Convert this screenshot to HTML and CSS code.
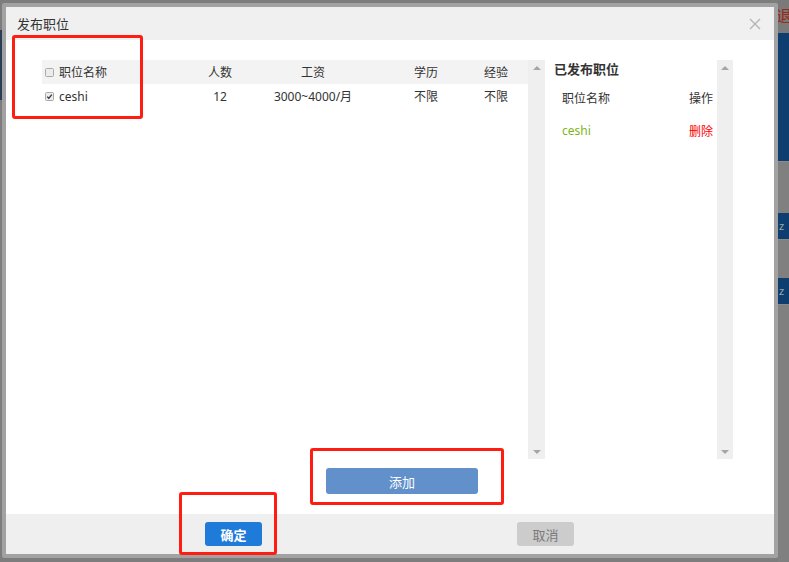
FILE: index.html
```html
<!DOCTYPE html>
<html lang="zh">
<head>
<meta charset="utf-8">
<title>发布职位</title>
<link rel="stylesheet" href="styles.css">
</head>
<body>
<div class="page">
  <div class="edge-left"><div class="edge-blue"></div></div>
  <div class="dialog">
    <div class="dlg-head">
      <span class="dlg-title">发布职位</span>
      <svg class="dlg-close" width="12" height="12" viewBox="0 0 12 12"><path d="M1 1L11 11M11 1L1 11" stroke="#b3b3b3" stroke-width="1.3" fill="none"/></svg>
    </div>
    <div class="dlg-body">
      <div class="panels">
        <div class="jobs">
          <div class="jrow jhead">
            <div class="c-name"><svg class="cb" width="9" height="9" viewBox="0 0 9 9"><rect x="0.5" y="0.5" width="8" height="8" rx="1" fill="#ececec" stroke="#a9a9a9"/></svg><span>职位名称</span></div>
            <div class="c-mid">人数</div>
            <div class="c-mid">工资</div>
            <div class="c-mid">学历</div>
            <div class="c-mid">经验</div>
          </div>
          <div class="jrow">
            <div class="c-name"><svg class="cb" width="9" height="9" viewBox="0 0 9 9"><rect x="0.5" y="0.5" width="8" height="8" rx="1" fill="#ececec" stroke="#a9a9a9"/><path d="M2.2 4.6L3.8 6.3L6.8 2.6" stroke="#333" stroke-width="1.3" fill="none"/></svg><span>ceshi</span></div>
            <div class="c-mid">12</div>
            <div class="c-mid">3000~4000/月</div>
            <div class="c-mid">不限</div>
            <div class="c-mid">不限</div>
          </div>
        </div>
        <div class="vscroll"><i class="arr up"></i><i class="arr down"></i></div>
        <div class="published">
          <div class="pub-title">已发布职位</div>
          <div class="pub-row"><span>职位名称</span><span>操作</span></div>
          <div class="pub-row"><span class="green">ceshi</span><span class="red">删除</span></div>
        </div>
        <div class="vscroll narrow"><i class="arr up"></i><i class="arr down"></i></div>
      </div>
      <div class="add-wrap"><button class="btn-add">添加</button></div>
    </div>
    <div class="dlg-foot">
      <button class="btn-ok">确定</button>
      <button class="btn-cancel">取消</button>
    </div>
  </div>
  <div class="edge-right">
    <div class="er-top"><span class="er-char">退</span></div>
    <div class="er-blue"></div>
    <div class="er-gray"></div>
    <div class="er-blue small"><span>z</span></div>
    <div class="er-gray mid"></div>
    <div class="er-blue small2"><span>z</span></div>
    <div class="er-gray"></div>
  </div>
  <div class="mark m1"></div>
  <div class="mark m2"></div>
  <div class="mark m3"></div>
</div>
</body>
</html>
```

FILE: styles.css
```css
* { box-sizing: border-box; }
html, body { margin: 0; padding: 0; }
body {
  width: 789px;
  height: 562px;
  overflow: hidden;
  background: #7d7d7d;
  font-family: "Noto Sans", "Noto Sans CJK SC", sans-serif;
  color: #333;
}
.page {
  position: relative;
  display: flex;
  width: 789px;
  height: 562px;
  padding-top: 3px;
}
.edge-left {
  width: 2px;
  flex: none;
  padding-top: 27px;
}
.edge-blue {
  height: 70px;
  background: #2a3d56;
}
.dialog {
  width: 776px;
  height: 555px;
  flex: none;
  border: 4px solid #a2a2a2;
  border-radius: 2px;
  display: flex;
  flex-direction: column;
  background: #fff;
}
.dlg-head {
  height: 33px;
  flex: none;
  background: #f0f0f0;
  display: flex;
  align-items: center;
  justify-content: space-between;
  padding: 0 13px 0 11px;
}
.dlg-title {
  font-size: 13px;
  line-height: 18px;
  color: #333;
}
.dlg-close { display: block; }
.dlg-body {
  height: 474px;
  flex: none;
  padding: 20px 0 0 36px;
}
.panels {
  display: flex;
  height: 399px;
}
.jobs {
  width: 486px;
  flex: none;
}
.jrow {
  display: grid;
  grid-template-columns: 148px 60px 126px 100px 40px;
  height: 24px;
  align-items: center;
  font-size: 12px;
}
.jhead { background: #f3f3f3; }
.c-name {
  display: flex;
  align-items: center;
  padding-left: 3px;
  gap: 5px;
}
.cb { display: block; flex: none; }
.c-mid { text-align: center; white-space: nowrap; }
.vscroll {
  width: 17px;
  flex: none;
  background: #efefef;
  display: flex;
  flex-direction: column;
  justify-content: space-between;
  align-items: center;
  padding: 6px 0 5px;
}
.vscroll.narrow { width: 16px; }
.arr {
  display: block;
  width: 0;
  height: 0;
  border-left: 4px solid transparent;
  border-right: 4px solid transparent;
}
.arr.up { border-bottom: 4px solid #a5a5a5; }
.arr.down { border-top: 4px solid #a5a5a5; }
.published {
  width: 172px;
  flex: none;
  padding: 0 4px 0 9px;
}
.pub-title {
  font-size: 13px;
  font-weight: bold;
  line-height: 18px;
  margin-bottom: 3px;
  color: #333;
}
.pub-row {
  height: 33px;
  display: flex;
  align-items: center;
  justify-content: space-between;
  padding-left: 8px;
  font-size: 12px;
}
.green { color: #7eb51e; }
.red { color: #ff0000; }
.add-wrap {
  padding: 9px 0 0 284px;
}
button {
  font-family: "Noto Sans", "Noto Sans CJK SC", sans-serif;
  border: none;
  padding: 0;
  border-radius: 3px;
  cursor: pointer;
}
.btn-add {
  width: 152px;
  height: 26px;
  background: #6190ca;
  color: #fff;
  font-size: 13px;
}
.dlg-foot {
  height: 40px;
  flex: none;
  background: #efefef;
  display: flex;
  align-items: flex-start;
  padding: 8px 0 0 199px;
  gap: 255px;
}
.btn-ok {
  width: 57px;
  height: 24px;
  background: #1f7bd9;
  color: #fff;
  font-size: 13px;
  font-weight: bold;
}
.btn-cancel {
  width: 57px;
  height: 24px;
  background: #cccccc;
  color: #7a7a7a;
  font-size: 13px;
}
.edge-right {
  width: 11px;
  flex: none;
  margin-top: -3px;
  display: flex;
  flex-direction: column;
  overflow: hidden;
}
.er-top {
  height: 33px;
  flex: none;
  background: #7a7a7a;
  position: relative;
}
.er-char {
  position: absolute;
  left: -2px;
  top: 7px;
  font-size: 16px;
  line-height: 18px;
  color: #9a2a1a;
}
.er-blue {
  height: 128px;
  flex: none;
  background: #0e3d70;
}
.er-gray {
  height: 52px;
  flex: none;
  background: #808080;
  border-top: 1px solid #8a8a8a;
}
.er-gray.mid { height: 39px; }
.er-gray:last-child { flex: 1; }
.er-blue.small, .er-blue.small2 {
  height: 26px;
  color: #9aa;
  font-size: 11px;
  line-height: 26px;
  padding-left: 1px;
}
.mark {
  position: absolute;
  border: 3px solid #ff1c10;
  border-radius: 3px;
}
.m1 { left: 12px; top: 35px; width: 131px; height: 84px; }
.m2 { left: 310px; top: 448px; width: 194px; height: 57px; }
.m3 { left: 179px; top: 492px; width: 98px; height: 63px; }
```
